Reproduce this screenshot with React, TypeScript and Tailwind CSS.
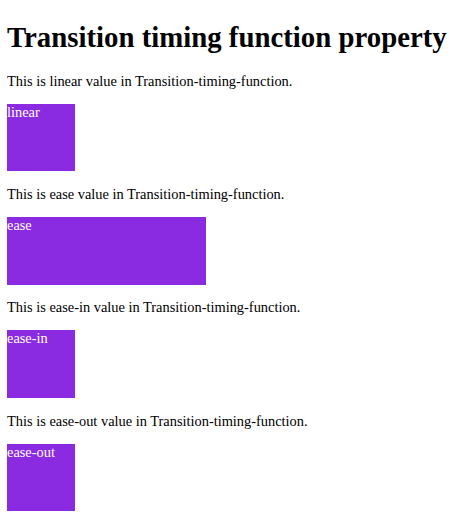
export default function App() {
  const items = [
    { name: "linear", width: 68 },
    { name: "ease", width: 199 },
    { name: "ease-in", width: 68 },
    { name: "ease-out", width: 68 },
  ];
  return (
    <div className="min-h-[529px] bg-white px-[7px] pt-[21px] text-black [font-family:'Liberation_Serif',serif]">
      <h1 className="m-0 pb-[4px] text-[28.8px] font-bold leading-[33px]">Transition timing function property</h1>
      {items.map((it) => (
        <div key={it.name}>
          <p className="mt-[14.8px] mb-[14.5px] text-[14.4px] leading-[16.5px]">
            This is {it.name} value in Transition-timing-function.
          </p>
          <div
            className="h-[67.5px] bg-[#8a2be2] text-[14.4px] leading-[16.5px] text-white"
            style={{ width: it.width }}
          >
            {it.name}
          </div>
        </div>
      ))}
    </div>
  );
}
